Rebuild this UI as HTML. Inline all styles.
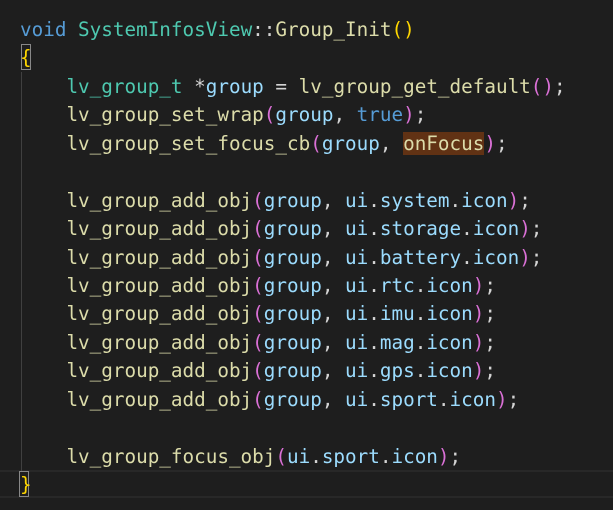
<!DOCTYPE html>
<html><head><style>
html,body{margin:0;padding:0;background:#1e1e1e;width:613px;height:510px;overflow:hidden}
.c{position:absolute;left:20px;top:16px;font-family:"DejaVu Sans Mono","Liberation Mono",monospace;font-size:19.3px;line-height:28.44px;color:#d4d4d4;white-space:pre}
.k{color:#569cd6}.t{color:#4ec9b0}.f{color:#dcdcaa}.v{color:#9cdcfe}.g{color:#ffd700}.p{color:#da70d6}
.hl{background:#613214}
.guide{position:absolute;left:21px;top:72px;width:1px;height:399px;background:#404040}
.cur{position:absolute;left:0;top:470px;width:613px;height:28px;border-top:2px solid #282828;border-bottom:2px solid #282828;box-sizing:border-box}
.bm{position:absolute;width:10px;height:26px;border:1px solid #888;box-sizing:border-box}
</style></head><body>
<div class="cur"></div>
<div class="guide"></div>
<div class="bm" style="left:21px;top:44px"></div>
<div class="bm" style="left:19px;top:471px"></div>
<div class="c"><span class="k">void</span> <span class="t">SystemInfosView</span>::<span class="f">Group_Init</span><span class="g">()</span>
<span class="g">{</span>
    <span class="t">lv_group_t</span> *<span class="v">group</span> = <span class="f">lv_group_get_default</span><span class="p">()</span>;
    <span class="f">lv_group_set_wrap</span><span class="p">(</span><span class="v">group</span>, <span class="k">true</span><span class="p">)</span>;
    <span class="f">lv_group_set_focus_cb</span><span class="p">(</span><span class="v">group</span>, <span class="f hl">onFocus</span><span class="p">)</span>;

    <span class="f">lv_group_add_obj</span><span class="p">(</span><span class="v">group</span>, <span class="v">ui</span>.<span class="v">system</span>.<span class="v">icon</span><span class="p">)</span>;
    <span class="f">lv_group_add_obj</span><span class="p">(</span><span class="v">group</span>, <span class="v">ui</span>.<span class="v">storage</span>.<span class="v">icon</span><span class="p">)</span>;
    <span class="f">lv_group_add_obj</span><span class="p">(</span><span class="v">group</span>, <span class="v">ui</span>.<span class="v">battery</span>.<span class="v">icon</span><span class="p">)</span>;
    <span class="f">lv_group_add_obj</span><span class="p">(</span><span class="v">group</span>, <span class="v">ui</span>.<span class="v">rtc</span>.<span class="v">icon</span><span class="p">)</span>;
    <span class="f">lv_group_add_obj</span><span class="p">(</span><span class="v">group</span>, <span class="v">ui</span>.<span class="v">imu</span>.<span class="v">icon</span><span class="p">)</span>;
    <span class="f">lv_group_add_obj</span><span class="p">(</span><span class="v">group</span>, <span class="v">ui</span>.<span class="v">mag</span>.<span class="v">icon</span><span class="p">)</span>;
    <span class="f">lv_group_add_obj</span><span class="p">(</span><span class="v">group</span>, <span class="v">ui</span>.<span class="v">gps</span>.<span class="v">icon</span><span class="p">)</span>;
    <span class="f">lv_group_add_obj</span><span class="p">(</span><span class="v">group</span>, <span class="v">ui</span>.<span class="v">sport</span>.<span class="v">icon</span><span class="p">)</span>;

    <span class="f">lv_group_focus_obj</span><span class="p">(</span><span class="v">ui</span>.<span class="v">sport</span>.<span class="v">icon</span><span class="p">)</span>;
<span class="g">}</span></div>
</body></html>
